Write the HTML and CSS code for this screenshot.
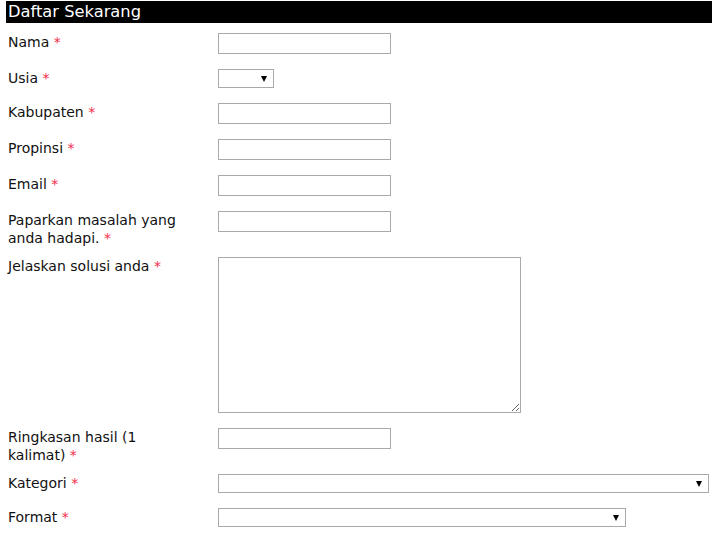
FILE: index.html
```html
<!DOCTYPE html>
<html lang="id">
<head>
<meta charset="utf-8">
<title>Daftar Sekarang</title>
<link rel="stylesheet" href="styles.css">
</head>
<body>
<div class="header">Daftar Sekarang</div>
<form class="form">
  <div class="row">
    <label class="label">Nama <span class="req">*</span></label>
    <div class="field"><input class="text" type="text"></div>
  </div>
  <div class="row">
    <label class="label">Usia <span class="req">*</span></label>
    <div class="field"><span class="sel sel-age"><select></select></span></div>
  </div>
  <div class="row">
    <label class="label">Kabupaten <span class="req">*</span></label>
    <div class="field"><input class="text" type="text"></div>
  </div>
  <div class="row">
    <label class="label">Propinsi <span class="req">*</span></label>
    <div class="field"><input class="text" type="text"></div>
  </div>
  <div class="row">
    <label class="label">Email <span class="req">*</span></label>
    <div class="field"><input class="text" type="text"></div>
  </div>
  <div class="row">
    <label class="label">Paparkan masalah yang anda hadapi. <span class="req">*</span></label>
    <div class="field"><input class="text" type="text"></div>
  </div>
  <div class="row">
    <label class="label">Jelaskan solusi anda <span class="req">*</span></label>
    <div class="field"><textarea class="area"></textarea></div>
  </div>
  <div class="row">
    <label class="label">Ringkasan hasil (1 kalimat) <span class="req">*</span></label>
    <div class="field"><input class="text" type="text"></div>
  </div>
  <div class="row">
    <label class="label">Kategori <span class="req">*</span></label>
    <div class="field"><span class="sel sel-cat"><select></select></span></div>
  </div>
  <div class="row">
    <label class="label">Format <span class="req">*</span></label>
    <div class="field"><span class="sel sel-fmt"><select></select></span></div>
  </div>
</form>
</body>
</html>
```
FILE: styles.css
```css
html, body {
  margin: 0;
  padding: 0;
  background: #fff;
}
body {
  font-family: "DejaVu Sans", Verdana, sans-serif;
  font-size: 14px;
  color: #111;
  padding-top: 1px;
}
.header {
  margin-left: 6px;
  padding-left: 2px;
  height: 22px;
  line-height: 22px;
  background: #000;
  color: #fff;
  font-size: 16.3px;
}
.form {
  margin: 0;
  padding: 10px 0 0 8px;
}
.row {
  display: flex;
  align-items: flex-start;
}
.label {
  flex: 0 0 184px;
  padding-right: 26px;
  padding-bottom: 10px;
  line-height: 18px;
}
.req {
  color: #f52c4a;
}
.field {
  padding-bottom: 15px;
}
.text {
  display: block;
  box-sizing: border-box;
  width: 173px;
  height: 21px;
  margin: 0;
  padding: 1px 3px;
  border: 1px solid #a9a9a9;
  font: 13px "DejaVu Sans", sans-serif;
  background: #fff;
}
.area {
  display: block;
  box-sizing: border-box;
  width: 303px;
  height: 156px;
  margin: 0;
  padding: 2px;
  border: 1px solid #a9a9a9;
  font: 13px "DejaVu Sans", sans-serif;
  background: #fff;
}
.sel {
  position: relative;
  display: block;
  height: 19px;
}
.sel select {
  -webkit-appearance: none;
  appearance: none;
  display: block;
  box-sizing: border-box;
  width: 100%;
  height: 19px;
  margin: 0;
  border: 1px solid #a9a9a9;
  border-radius: 0;
  background: #fff;
  font: 13px "DejaVu Sans", sans-serif;
}
.sel::after {
  content: "";
  position: absolute;
  right: 7px;
  top: 7px;
  width: 0;
  height: 0;
  border-left: 3px solid transparent;
  border-right: 3px solid transparent;
  border-top: 6px solid #000;
  pointer-events: none;
}
.sel-age { width: 56px; }
.sel-cat { width: 491px; }
.sel-fmt { width: 408px; }
```
